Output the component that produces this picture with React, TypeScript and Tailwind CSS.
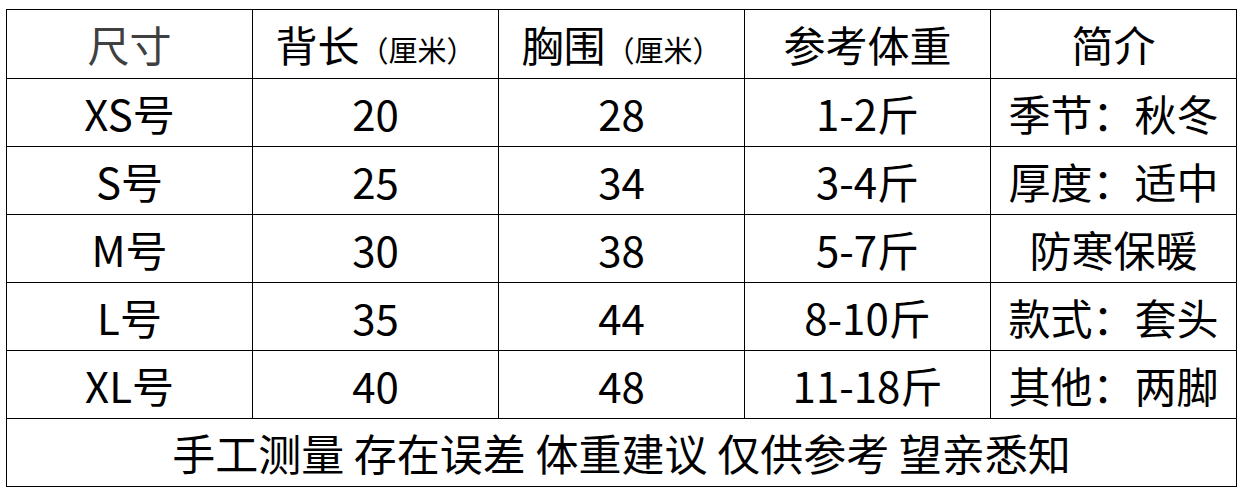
import React from "react";

const rows: string[][] = [
  ["XS号", "20", "28", "1-2斤", "季节：秋冬"],
  ["S号", "25", "34", "3-4斤", "厚度：适中"],
  ["M号", "30", "38", "5-7斤", "防寒保暖"],
  ["L号", "35", "44", "8-10斤", "款式：套头"],
  ["XL号", "40", "48", "11-18斤", "其他：两脚"],
];

const cell = "bg-white flex items-center justify-center whitespace-nowrap";

export default function App() {
  return (
    <div
      className="w-[1242px] h-[493px] bg-white pl-[6px] pt-[9px] text-black"
      style={{ fontFamily: '"Noto Sans CJK SC", "Noto Sans", sans-serif' }}
    >
      <div className="w-[1231px] grid grid-cols-[repeat(5,245px)] grid-rows-[68px_repeat(6,67px)] gap-px p-px bg-black text-[42px] leading-none">
        <div className={`${cell} text-[#404040]`}>尺寸</div>
        <div className={cell}>
          <span>
            背长<span className="text-[29px]">（厘米）</span>
          </span>
        </div>
        <div className={cell}>
          <span>
            胸围<span className="text-[29px]">（厘米）</span>
          </span>
        </div>
        <div className={cell}>参考体重</div>
        <div className={cell}>简介</div>
        {rows.map((r, i) =>
          r.map((c, j) => (
            <div key={`${i}-${j}`} className={cell}>
              {c}
            </div>
          ))
        )}
        <div className={`${cell} col-span-5 text-[43px]`}>手工测量 存在误差 体重建议 仅供参考 望亲悉知</div>
      </div>
    </div>
  );
}
